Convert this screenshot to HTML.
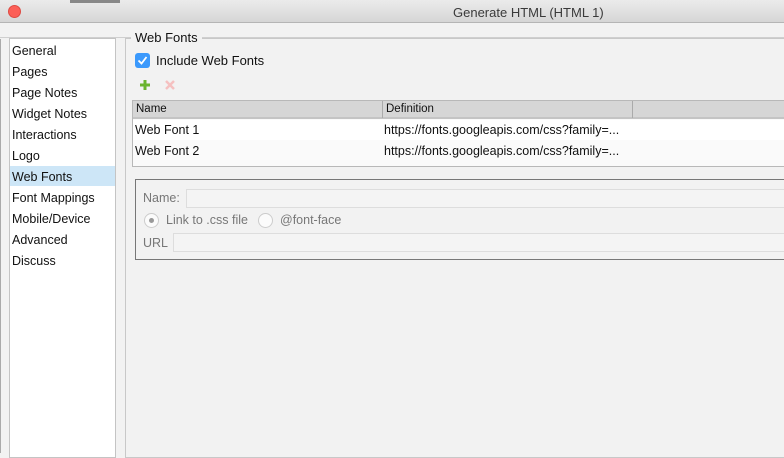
<!DOCTYPE html><html><head><style>
body{margin:0;width:784px;height:453px;overflow:hidden;background:#f2f2f2;font-family:"Liberation Sans",sans-serif;font-size:12.5px;color:#111;position:relative}
div{position:absolute;box-sizing:border-box}
.t{white-space:nowrap}
</style></head><body>
<div style="left:0;top:0;width:784px;height:23px;background:linear-gradient(#ebebeb,#d6d6d6);border-bottom:1px solid #b5b5b5"></div>
<div style="left:70px;top:0;width:50px;height:3px;background:#888"></div>
<div style="left:8px;top:5px;width:13px;height:13px;border-radius:50%;background:#fc5f57;border:1px solid #de4a42"></div>
<div class="t" style="left:453px;top:5px;font-size:13px;color:#3a3a3a">Generate HTML (HTML 1)</div>
<div style="left:0;top:23px;width:784px;height:15px;background:#f2f2f2;border-bottom:1px solid #cfcfcf"></div>
<div style="left:0;top:39px;width:1px;height:414px;background:#aaa"></div>
<div style="left:9px;top:38px;width:107px;height:420px;background:#fff;border:1px solid #c4c4c4"></div>
<div style="left:10px;top:166px;width:105px;height:20px;background:#cde6f7"></div>
<div class="t" style="left:12px;top:41px;line-height:21px">General<br>Pages<br>Page Notes<br>Widget Notes<br>Interactions<br>Logo<br>Web Fonts<br>Font Mappings<br>Mobile/Device<br>Advanced<br>Discuss</div>
<div style="left:125px;top:38px;width:700px;height:420px;border:1px solid #c8c8c8"></div>
<div class="t" style="left:131px;top:30px;background:#f2f2f2;padding:0 4px;font-size:13px">Web Fonts</div>
<div style="left:135px;top:53px;width:15px;height:15px;border-radius:3px;background:#3b99fc"></div>
<svg style="position:absolute;left:135px;top:53px" width="15" height="15"><path d="M3.5 7.5l3 3 5-6.5" stroke="#fff" stroke-width="1.8" fill="none"/></svg>
<div class="t" style="left:156px;top:53px;font-size:13px">Include Web Fonts</div>
<svg style="position:absolute;left:139px;top:79px" width="12" height="12"><path d="M6 1v10M1 6h10" stroke="#6ab42d" stroke-width="3"/></svg>
<svg style="position:absolute;left:164px;top:79px" width="12" height="12"><path d="M2 2l8 8M10 2l-8 8" stroke="#f5c0c0" stroke-width="2.5"/></svg>
<div style="left:132px;top:100px;width:660px;height:67px;background:#fafafa;border:1px solid #b8b8b8"></div>
<div style="left:133px;top:101px;width:660px;height:18px;background:#d6d6d6;border-bottom:2px solid #c4c4c4"></div>
<div style="left:382px;top:101px;width:1px;height:17px;background:#aaa"></div>
<div style="left:632px;top:101px;width:1px;height:17px;background:#aaa"></div>
<div class="t" style="left:136px;top:103px;font-size:11.5px">Name</div>
<div class="t" style="left:386px;top:103px;font-size:11.5px">Definition</div>
<div style="left:133px;top:120px;width:660px;height:20px;background:#fff"></div>
<div class="t" style="left:135px;top:123px">Web Font 1</div>
<div class="t" style="left:384px;top:123px">https://fonts.googleapis.com/css?family=...</div>
<div class="t" style="left:135px;top:144px">Web Font 2</div>
<div class="t" style="left:384px;top:144px">https://fonts.googleapis.com/css?family=...</div>
<div style="left:135px;top:179px;width:700px;height:81px;border:1px solid #777"></div>
<div class="t" style="left:143px;top:191px;color:#777">Name:</div>
<div style="left:186px;top:189px;width:620px;height:19px;border:1px solid #ddd;background:#f4f4f4"></div>
<div style="left:144px;top:213px;width:15px;height:15px;border-radius:50%;border:1px solid #ccc;background:#fbfbfb"></div>
<div style="left:149px;top:218px;width:5px;height:5px;border-radius:50%;background:#999"></div>
<div class="t" style="left:166px;top:213px;color:#777">Link to .css file</div>
<div style="left:258px;top:213px;width:15px;height:15px;border-radius:50%;border:1px solid #ccc;background:#fbfbfb"></div>
<div class="t" style="left:280px;top:213px;color:#777">@font-face</div>
<div class="t" style="left:143px;top:236px;color:#777">URL</div>
<div style="left:173px;top:233px;width:640px;height:19px;border:1px solid #ddd;background:#f4f4f4"></div>
</body></html>
